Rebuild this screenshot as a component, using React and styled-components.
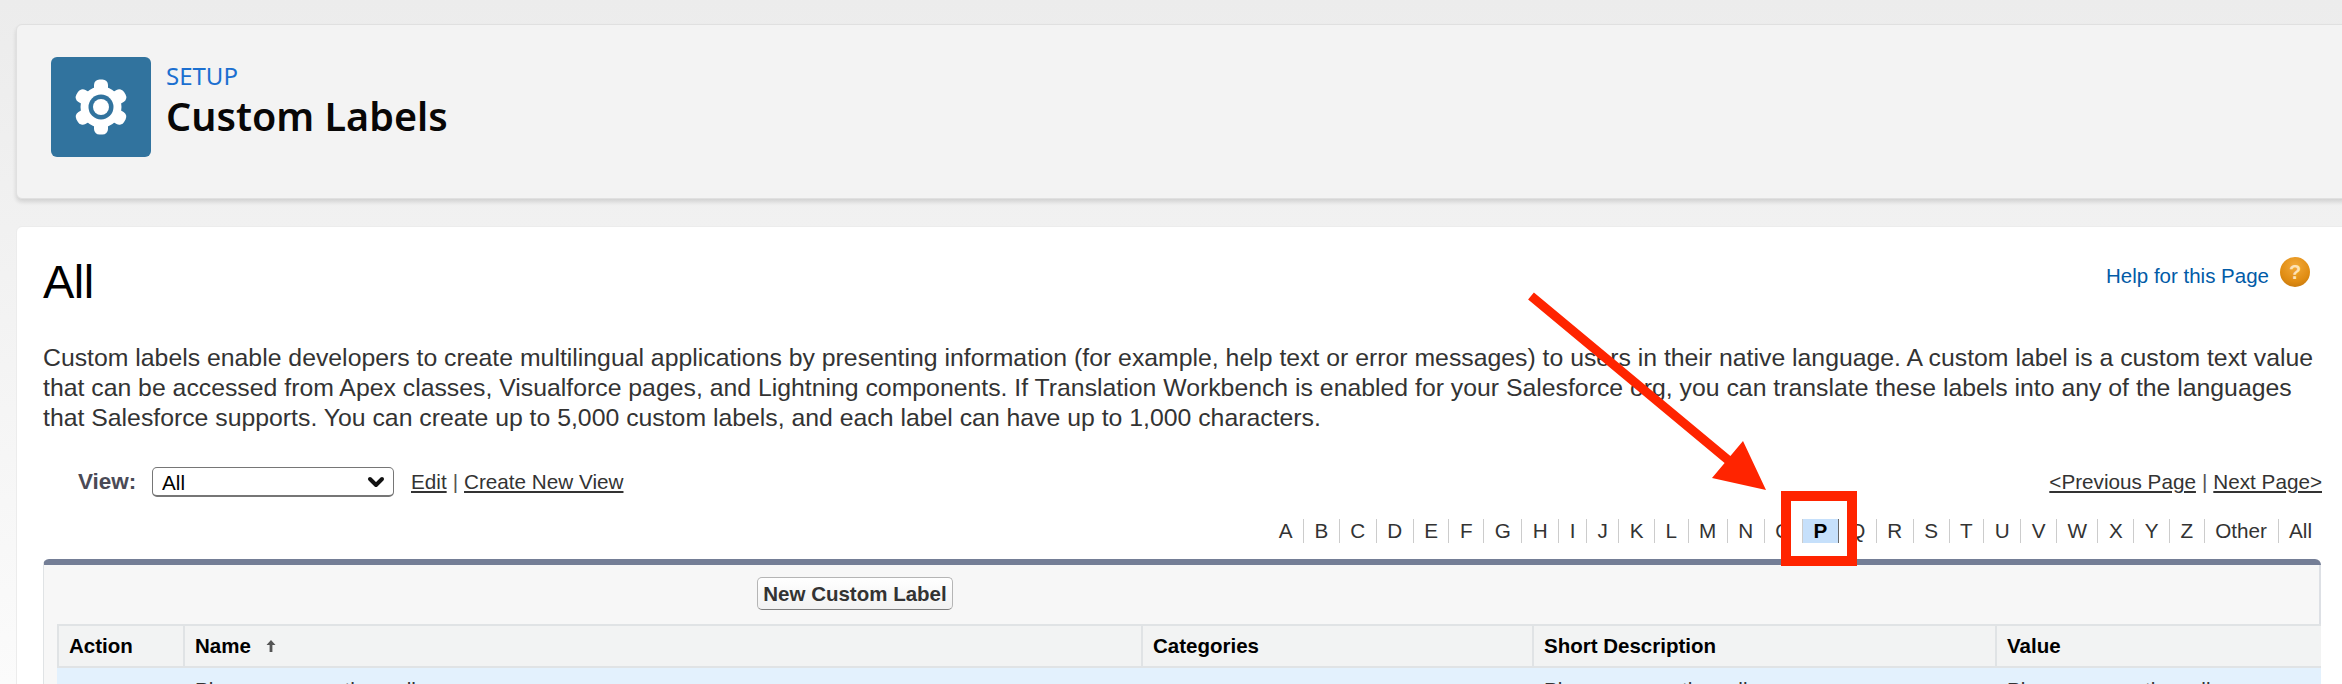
import React from "react";
import styled, { createGlobalStyle } from "styled-components";
import { ChevronDown } from "lucide-react";

const letters = "ABCDEFGHIJKLMNOPQRSTUVWXYZ".split("").concat(["Other", "All"]);

const columns = [
  { title: "Action", width: 126 },
  { title: "Name", width: 958, sorted: true },
  { title: "Categories", width: 391 },
  { title: "Short Description", width: 463 },
  { title: "Value", width: 319 },
];

const gearTeeth = [0, 60, 120, 180, 240, 300];

function App() {
  return (
    <Page>
      <GlobalStyle />
      <HeaderCard>
        <IconTile>
          <svg width="60" height="60" viewBox="0 0 60 60">
            <circle cx="30" cy="30" r="20.5" fill="#fff" />
            {gearTeeth.map((deg) => (
              <rect
                key={deg}
                x="23"
                y="2.5"
                width="14"
                height="18"
                rx="5.5"
                fill="#fff"
                transform={`rotate(${deg} 30 30)`}
              />
            ))}
            <circle cx="30" cy="30" r="12.5" fill="#31739e" />
            <circle cx="30" cy="30" r="8" fill="#fff" />
          </svg>
        </IconTile>
        <TitleBlock>
          <Breadcrumb>SETUP</Breadcrumb>
          <PageTitle>Custom Labels</PageTitle>
        </TitleBlock>
      </HeaderCard>

      <BodyCard>
        <TopRow>
          <ViewTitle>All</ViewTitle>
          <HelpLink>
            Help for this Page
            <HelpBadge>?</HelpBadge>
          </HelpLink>
        </TopRow>

        <Intro>
          Custom labels enable developers to create multilingual applications by presenting information (for example, help
          text or error messages) to users in their native language. A custom label is a custom text value that can be
          accessed from Apex classes, Visualforce pages, and Lightning components. If Translation Workbench is enabled for
          your Salesforce org, you can translate these labels into any of the languages that Salesforce supports. You can
          create up to 5,000 custom labels, and each label can have up to 1,000 characters.
        </Intro>

        <ViewRow>
          <ViewPicker>
            <ViewLabel>View:</ViewLabel>
            <SelectWrap>
              <ViewSelect defaultValue="All">
                <option>All</option>
              </ViewSelect>
              <SelectChevron size={24} strokeWidth={4} />
            </SelectWrap>
            <PlainLink>Edit</PlainLink>
            <Pipe>|</Pipe>
            <PlainLink>Create New View</PlainLink>
          </ViewPicker>
          <Pager>
            <PlainLink>&lt;Previous Page</PlainLink>
            <Pipe>|</Pipe>
            <PlainLink>Next Page&gt;</PlainLink>
          </Pager>
        </ViewRow>

        <LetterBar>
          {letters.map((letter) => (
            <Letter key={letter} $active={letter === "P"}>
              {letter}
            </Letter>
          ))}
        </LetterBar>

        <ListBlock>
          <Toolbar>
            <NewButton>New Custom Label</NewButton>
          </Toolbar>
          <HeaderRow>
            {columns.map((col) => (
              <HeadCell key={col.title} $width={col.width}>
                {col.title}
                {col.sorted && (
                  <SortArrow width="12" height="14" viewBox="0 0 12 14">
                    <path d="M6 1 10.5 6H7.4v7H4.6V6H1.5z" fill="#555" />
                  </SortArrow>
                )}
              </HeadCell>
            ))}
          </HeaderRow>
          <DataRow>
            <DataCell $width={126}>
              <RowMarker />
            </DataCell>
            <DataCell $width={958}>Please_ensure_the_call</DataCell>
            <DataCell $width={391} />
            <DataCell $width={463}>Please ensure the call</DataCell>
            <DataCell $width={319}>Please ensure the call</DataCell>
          </DataRow>
        </ListBlock>
      </BodyCard>

      <CalloutArrow width="260" height="210" viewBox="0 0 260 210">
        <path d="M5.9.5.1 7.5 196.6 171 184 186 238 198 215 149 202.4 164z" fill="#ff2400" />
      </CalloutArrow>
      <CalloutBox />
    </Page>
  );
}

const GlobalStyle = createGlobalStyle`
  html, body {
    margin: 0;
    padding: 0;
    background: #fff;
  }
  body {
    font-family: "Liberation Sans", Arial, sans-serif;
    color: #333;
  }
`;

const Page = styled.div`
  position: relative;
  width: 2342px;
  height: 684px;
  overflow: hidden;
  padding: 24px 0 0 16px;
  box-sizing: border-box;
  background: linear-gradient(180deg, #ececec 0%, #fbfbfb 100%);
`;

const HeaderCard = styled.div`
  display: flex;
  align-items: flex-start;
  gap: 15px;
  box-sizing: border-box;
  width: 2340px;
  height: 175px;
  padding: 32px 0 0 34px;
  background: #f3f3f3;
  border: 1px solid #e0e0e0;
  border-radius: 6px;
  box-shadow: 0 3px 4px rgba(0, 0, 0, 0.13);
`;

const IconTile = styled.div`
  display: flex;
  align-items: center;
  justify-content: center;
  width: 100px;
  height: 100px;
  flex: none;
  border-radius: 6px;
  background: #31739e;
`;

const TitleBlock = styled.div`
  display: flex;
  flex-direction: column;
  padding-top: 3px;
`;

const Breadcrumb = styled.span`
  font-family: "Noto Sans", sans-serif;
  font-size: 24px;
  line-height: 31px;
  color: #1b6fd0;
`;

const PageTitle = styled.h1`
  margin: 0;
  font-family: "Noto Sans", sans-serif;
  font-size: 39.5px;
  line-height: 50px;
  font-weight: 600;
  color: #080707;
`;

const BodyCard = styled.div`
  box-sizing: border-box;
  width: 2340px;
  height: 500px;
  margin-top: 27px;
  padding: 0 0 0 26px;
  background: #fff;
  border: 1px solid #ececec;
  border-radius: 6px 0 0 0;
`;

const TopRow = styled.div`
  display: flex;
  align-items: flex-start;
  justify-content: space-between;
  width: 2267px;
  height: 116px;
  padding-top: 28px;
  box-sizing: border-box;
`;

const ViewTitle = styled.h2`
  margin: 0;
  font-size: 47px;
  line-height: 54px;
  font-weight: 400;
  letter-spacing: -0.5px;
  color: #000;
`;

const HelpLink = styled.a`
  display: flex;
  align-items: center;
  gap: 11px;
  margin-top: 6px;
  font-size: 20.5px;
  line-height: 30px;
  color: #015ba7;
`;

const HelpBadge = styled.span`
  display: flex;
  align-items: center;
  justify-content: center;
  width: 30px;
  height: 30px;
  margin-top: -9px;
  border-radius: 50%;
  font-size: 20px;
  font-weight: 700;
  color: #fde3b8;
  background: radial-gradient(circle at 50% 30%, #f2a93a 0%, #e08c12 60%, #b96f0c 100%);
`;

const Intro = styled.p`
  width: 2280px;
  margin: 0;
  font-size: 24.8px;
  line-height: 30px;
  color: #333;
`;

const ViewRow = styled.div`
  display: flex;
  align-items: center;
  justify-content: space-between;
  width: 2279px;
  height: 34px;
  margin-top: 32px;
`;

const ViewPicker = styled.div`
  display: flex;
  align-items: center;
  padding-left: 35px;
  font-size: 20.7px;
`;

const ViewLabel = styled.label`
  width: 74px;
  font-size: 22.5px;
  font-weight: 700;
  color: #4a4a56;
`;

const SelectWrap = styled.div`
  position: relative;
  width: 242px;
  height: 30px;
  margin-right: 17px;
`;

const ViewSelect = styled.select`
  appearance: none;
  box-sizing: border-box;
  display: block;
  width: 100%;
  height: 100%;
  padding: 2px 0 0 9px;
  font-family: "Liberation Sans", Arial, sans-serif;
  font-size: 20.7px;
  color: #000;
  background: #fff;
  border: 1px solid #767676;
  border-bottom-width: 2px;
  border-radius: 5px;
`;

const SelectChevron = styled(ChevronDown)`
  position: absolute;
  top: 3px;
  right: 6px;
  color: #111;
  pointer-events: none;
`;

const PlainLink = styled.a`
  font-size: 20.7px;
  color: #333;
  text-decoration: underline;
`;

const Pipe = styled.span`
  padding: 0 6px;
  font-size: 20.7px;
  color: #555;
`;

const Pager = styled.div`
  display: flex;
  align-items: center;
`;

const LetterBar = styled.div`
  display: flex;
  justify-content: flex-end;
  width: 2269px;
  margin-top: 20px;
  height: 24px;
`;

const Letter = styled.span`
  padding: 0 10.5px;
  font-size: 20.7px;
  line-height: 24px;
  font-weight: ${(p) => (p.$active ? 700 : 400)};
  color: ${(p) => (p.$active ? "#000" : "#333")};
  background: ${(p) => (p.$active ? "#c6e0fb" : "transparent")};
  border-right: 1px solid ${(p) => (p.$active ? "#666" : "#ccc")};

  &:last-child {
    padding-right: 0;
    border-right: none;
  }
`;

const ListBlock = styled.div`
  box-sizing: border-box;
  width: 2278px;
  margin-top: 16px;
  background: #f7f7f7;
  border-top: 6px solid #747e96;
  border-left: 1px solid #e0e3e5;
  border-radius: 6px 6px 0 0;
`;

const Toolbar = styled.div`
  display: flex;
  align-items: flex-start;
  height: 59px;
  padding: 12px 0 0 713px;
  box-sizing: border-box;
  border-right: 2px solid #dde0e5;
`;

const NewButton = styled.button`
  width: 196px;
  height: 33px;
  padding: 0;
  font-family: "Liberation Sans", Arial, sans-serif;
  font-size: 20.5px;
  font-weight: 700;
  color: #333;
  background: linear-gradient(180deg, #fff 0%, #f2f2f2 100%);
  border: 1px solid #b5b5b5;
  border-bottom-color: #7f7f7f;
  border-radius: 5px;
`;

const HeaderRow = styled.div`
  display: flex;
  height: 44px;
  margin-left: 13px;
  background: #f2f3f3;
  border-top: 2px solid #e0e3e5;
  border-bottom: 2px solid #e0e3e5;
  border-left: 2px solid #e0e3e5;
  box-sizing: border-box;
`;

const HeadCell = styled.div`
  display: flex;
  align-items: center;
  box-sizing: border-box;
  width: ${(p) => p.$width}px;
  padding-left: 10px;
  font-size: 20.5px;
  font-weight: 700;
  color: #000;
  border-right: 2px solid #e0e3e5;

  &:last-child {
    border-right: none;
  }
`;

const SortArrow = styled.svg`
  margin-left: 14px;
`;

const DataRow = styled.div`
  display: flex;
  height: 60px;
  margin-left: 13px;
  background: #e3f1fd;
`;

const DataCell = styled.div`
  position: relative;
  box-sizing: border-box;
  width: ${(p) => p.$width}px;
  padding: 10px 0 0 12px;
  font-size: 20.7px;
  line-height: 24px;
  color: #333;
`;

const RowMarker = styled.span`
  position: absolute;
  top: 18px;
  right: 17px;
  width: 8px;
  height: 30px;
  background: linear-gradient(180deg, #8ccaf0 0%, #7fc1e8 100%);
`;

const CalloutArrow = styled.svg`
  position: absolute;
  left: 1528px;
  top: 292px;
`;

const CalloutBox = styled.div`
  position: absolute;
  left: 1781px;
  top: 491px;
  width: 76px;
  height: 75px;
  box-sizing: border-box;
  border: 10px solid #ff2400;
`;

export default App;
